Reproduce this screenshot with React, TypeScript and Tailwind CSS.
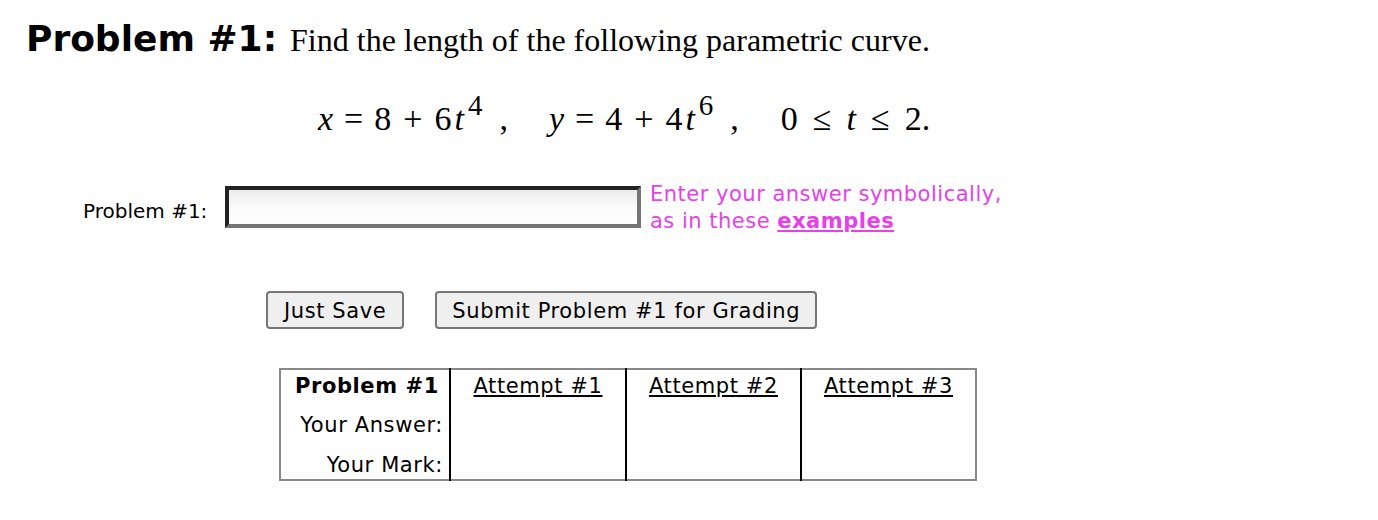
import React from 'react';

const sans = { fontFamily: '"DejaVu Sans", Verdana, sans-serif' };
const serif = { fontFamily: '"Liberation Serif", "Times New Roman", serif' };

function Eq() {
  return (
    <div className="flex items-baseline text-[34px] leading-none text-black" style={serif}>
      <i>x</i>
      <span className="mx-[11px]">=</span>
      <span>8</span>
      <span className="mx-[12px]">+</span>
      <span>6</span>
      <i className="ml-[3px]">t</i>
      <span className="text-[29px] relative -top-[15px] ml-[4px]">4</span>
      <span className="ml-[17px]">,</span>
      <i className="ml-[41px]">y</i>
      <span className="mx-[11px]">=</span>
      <span>4</span>
      <span className="mx-[12px]">+</span>
      <span>4</span>
      <i className="ml-[3px]">t</i>
      <span className="text-[29px] relative -top-[15px] ml-[4px]">6</span>
      <span className="ml-[17px]">,</span>
      <span className="ml-[42px]">0</span>
      <span className="mx-[15px]">≤</span>
      <i>t</i>
      <span className="mx-[15px]">≤</span>
      <span>2.</span>
    </div>
  );
}

export default function App() {
  return (
    <div className="w-[1378px] h-[520px] bg-white text-black overflow-hidden">
      <div className="flex items-baseline pl-[26px] pt-[21px]">
        <span className="text-[36px] font-bold leading-none" style={sans}>Problem #1:</span>
        <span className="ml-[13px] text-[32px] leading-none" style={serif}>
          Find the length of the following parametric curve.
        </span>
      </div>

      <div className="pl-[318px] pt-[45px]">
        <Eq />
      </div>

      <div className="flex items-start pt-[50px]" style={sans}>
        <span className="w-[225px] pl-[83px] mt-[10px] text-[20px] leading-[30px]">Problem #1:</span>
        <div className="w-[416px] h-[42px] border-4 border-t-[#222] border-l-[#222] border-b-[#757575] border-r-[#757575] bg-gradient-to-b from-[#ececec] via-[#fafafa] to-white" />
        <div className="ml-[9px] -mt-[5px] text-[21px] tracking-[0.5px] leading-[27px] text-[#e83fe8]">
          <div>Enter your answer symbolically,</div>
          <div>
            as in these <a className="font-bold underline">examples</a>
          </div>
        </div>
      </div>

      <div className="flex pl-[266px] pt-[56px] gap-[31px] text-[21px] tracking-[0.6px]" style={sans}>
        <button className="h-[38px] px-[16px] pt-[3px] bg-[#efefef] border-2 border-[#767676] rounded-[4px]">Just Save</button>
        <button className="h-[38px] px-[15px] pt-[3px] bg-[#efefef] border-2 border-[#767676] rounded-[4px]">Submit Problem #1 for Grading</button>
      </div>

      <div className="pl-[279px] pt-[39px]" style={sans}>
        <table className="border-2 border-[#888] border-collapse text-[21px] tracking-[0.6px]">
          <tbody>
            <tr className="h-[36px] align-top leading-[33px]">
              <th className="w-[170px] text-right pr-[10px] font-bold border-r-2 border-black">Problem #1</th>
              <td className="w-[176px] text-center underline border-r-2 border-black">Attempt #1</td>
              <td className="w-[175px] text-center underline border-r-2 border-black">Attempt #2</td>
              <td className="w-[175px] text-center underline">Attempt #3</td>
            </tr>
            <tr className="h-[41px] align-top leading-[41px]">
              <td className="text-right pr-[6px] border-r-2 border-black">Your Answer:</td>
              <td className="border-r-2 border-black"></td>
              <td className="border-r-2 border-black"></td>
              <td></td>
            </tr>
            <tr className="h-[33px] align-top leading-[27px]">
              <td className="text-right pr-[6px] pt-[6px] border-r-2 border-black">Your Mark:</td>
              <td className="border-r-2 border-black"></td>
              <td className="border-r-2 border-black"></td>
              <td></td>
            </tr>
          </tbody>
        </table>
      </div>
    </div>
  );
}
